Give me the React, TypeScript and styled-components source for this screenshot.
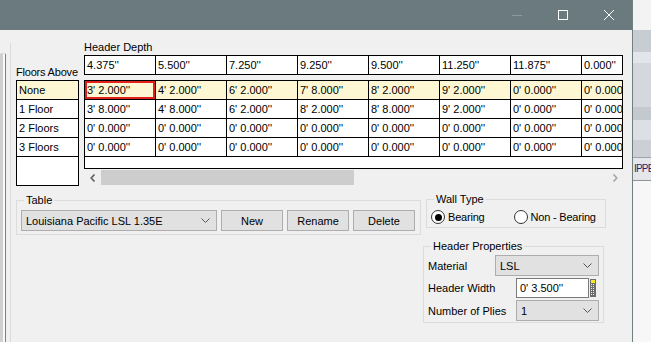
import styled, { createGlobalStyle } from "styled-components"

const GlobalStyle = createGlobalStyle`
  html, body {
    margin: 0;
    padding: 0;
  }
  body {
    width: 651px;
    height: 342px;
    overflow: hidden;
    background: #f0f0f0;
    font-family: "Liberation Sans", Arial, sans-serif;
    font-size: 11px;
    color: #000;
  }
`

const depths = ["4.375''", "5.500''", "7.250''", "9.250''", "9.500''", "11.250''", "11.875''", "0.000''"]
const floors = ["None", "1 Floor", "2 Floors", "3 Floors"]
const zeros = Array(8).fill("0' 0.000''")
const values = [
  ["3' 2.000''", "4' 2.000''", "6' 2.000''", "7' 8.000''", "8' 2.000''", "9' 2.000''", "0' 0.000''", "0' 0.000''"],
  ["3' 8.000''", "4' 8.000''", "6' 2.000''", "8' 2.000''", "8' 8.000''", "9' 2.000''", "0' 0.000''", "0' 0.000''"],
  zeros,
  zeros,
]

const bands = [
  { h: 30, c: "#f3f3f3" },
  { h: 22, c: "#c8cdd4" },
  { h: 11, c: "#e2e5e9" },
  { h: 44, c: "#d4d8de" },
  { h: 13, c: "#c4c8cf" },
  { h: 20, c: "#dcdfe3" },
  { h: 17, c: "#ccd0d6" },
  { h: 1, c: "#a0a4aa" },
]

const Chevron = () => (
  <svg width="9" height="5" viewBox="0 0 9 5">
    <path d="M0.5 0.5 L4.5 4.5 L8.5 0.5" fill="none" stroke="#555" strokeWidth="1" />
  </svg>
)

const Combo = (props: { text: string; width: number }) => (
  <ComboBox $width={props.width}>
    <span>{props.text}</span>
    <Chevron />
  </ComboBox>
)

export default function App() {
  return (
    <>
      <GlobalStyle />
      <Screen>
        <Window>
          <TitleBar>
            <CaptionButton>
              <svg width="10" height="10" viewBox="0 0 10 10">
                <path d="M0 5.5 H10" stroke="#8e9a9d" strokeWidth="1" />
              </svg>
            </CaptionButton>
            <CaptionButton>
              <svg width="10" height="10" viewBox="0 0 10 10">
                <rect x="0.5" y="0.5" width="9" height="9" fill="none" stroke="#fff" strokeWidth="1" />
              </svg>
            </CaptionButton>
            <CaptionButton>
              <svg width="10" height="10" viewBox="0 0 10 10">
                <path d="M0 0 L10 10 M10 0 L0 10" stroke="#fff" strokeWidth="1" />
              </svg>
            </CaptionButton>
          </TitleBar>
          <Body>
            <LeftEdge>
              <SidePanel />
              <Divider />
            </LeftEdge>
            <Content>
              <GridSection>
                <FloorsColumn>
                  <ColumnLabel>Floors Above</ColumnLabel>
                  <FloorsBox>
                    {floors.map((f, i) => (
                      <FloorRow key={f} $highlight={i === 0}>{f}</FloorRow>
                    ))}
                  </FloorsBox>
                </FloorsColumn>
                <DepthColumn>
                  <DepthLabel>Header Depth</DepthLabel>
                  <HeaderRow>
                    {depths.map((d, i) => (
                      <Cell key={i}>{d}</Cell>
                    ))}
                  </HeaderRow>
                  <DataTable>
                    {values.map((row, r) => (
                      <DataRow key={r} $highlight={r === 0}>
                        {row.map((v, c) => (
                          <Cell key={c} $selected={r === 0 && c === 0}>{v}</Cell>
                        ))}
                      </DataRow>
                    ))}
                  </DataTable>
                  <ScrollBar>
                    <ScrollArrow>
                      <svg width="6" height="8" viewBox="0 0 6 8">
                        <path d="M4.5 0.5 L1.2 4 L4.5 7.5" fill="none" stroke="#606060" strokeWidth="1.6" />
                      </svg>
                    </ScrollArrow>
                    <Thumb />
                    <Track />
                    <ScrollArrow>
                      <svg width="6" height="8" viewBox="0 0 6 8">
                        <path d="M1.5 0.5 L4.8 4 L1.5 7.5" fill="none" stroke="#a6a6a6" strokeWidth="1.6" />
                      </svg>
                    </ScrollArrow>
                  </ScrollBar>
                </DepthColumn>
              </GridSection>
              <LowerSection>
                <TableGroup>
                  <GroupLegend>Table</GroupLegend>
                  <TableControls>
                    <Combo text="Louisiana Pacific LSL 1.35E" width={196} />
                    <PushButton>New</PushButton>
                    <PushButton>Rename</PushButton>
                    <PushButton>Delete</PushButton>
                  </TableControls>
                </TableGroup>
                <RightColumn>
                  <WallGroup>
                    <GroupLegend>Wall Type</GroupLegend>
                    <RadioRow>
                      <RadioOption>
                        <RadioCircle $checked />
                        Bearing
                      </RadioOption>
                      <RadioOption>
                        <RadioCircle />
                        Non - Bearing
                      </RadioOption>
                    </RadioRow>
                  </WallGroup>
                  <PropsGroup>
                    <GroupLegend>Header Properties</GroupLegend>
                    <PropRow>
                      <span>Material</span>
                      <Combo text="LSL" width={104} />
                    </PropRow>
                    <PropRow>
                      <span>Header Width</span>
                      <InputGroup>
                        <TextInput>0' 3.500''</TextInput>
                        <svg width="6" height="18" viewBox="0 0 6 18">
                          <rect x="0" y="0" width="6" height="18" fill="#6e6e6e" />
                          <rect x="1" y="1" width="4" height="3" fill="#f5e828" />
                          {[5, 7, 9, 11, 13, 15].map((y) =>
                            [1, 3].map((x) => (
                              <rect key={`${x}-${y}`} x={x} y={y} width="1" height="1" fill="#e8e8e8" />
                            ))
                          )}
                        </svg>
                      </InputGroup>
                    </PropRow>
                    <PropRow>
                      <span>Number of Plies</span>
                      <Combo text="1" width={83} />
                    </PropRow>
                  </PropsGroup>
                </RightColumn>
              </LowerSection>
            </Content>
          </Body>
        </Window>
        <Backdrop>
          {bands.map((b, i) => (
            <Band key={i} $h={b.h} $c={b.c} />
          ))}
          <BackdropLabel>IPPE</BackdropLabel>
          <Band $h={1} $c="#8f949a" />
          <BackdropFill />
        </Backdrop>
      </Screen>
    </>
  )
}

const Screen = styled.div`
  display: flex;
  width: 651px;
  height: 342px;
  overflow: hidden;
`

const Window = styled.div`
  flex: 0 0 632px;
  display: flex;
  flex-direction: column;
  background: #f0f0f0;
  border-right: 1px solid #717e82;
`

const TitleBar = styled.div`
  height: 30px;
  flex: 0 0 30px;
  background: #6b7a7e;
  display: flex;
  justify-content: flex-end;
`

const CaptionButton = styled.div`
  width: 46px;
  height: 30px;
  display: flex;
  align-items: center;
  justify-content: center;
`

const Body = styled.div`
  flex: 1;
  display: flex;
`

const LeftEdge = styled.div`
  flex: 0 0 12px;
  display: flex;
  gap: 4px;
`

const SidePanel = styled.div`
  width: 6px;
  margin-top: 23px;
  border-top: 1px solid #dcdcdc;
  background: linear-gradient(to right, #cfcfcf 0 3px, #fafafa 3px 5px, #7c7c8a 5px 6px);
`

const Divider = styled.div`
  width: 1px;
  margin-top: 13px;
  background: #dadada;
`

const Content = styled.div`
  flex: 1;
  padding: 10px 0 0 4px;
  display: flex;
  flex-direction: column;
`

const GridSection = styled.div`
  display: flex;
  gap: 5px;
`

const FloorsColumn = styled.div`
  width: 63px;
  display: flex;
  flex-direction: column;
  justify-content: flex-end;
`

const ColumnLabel = styled.div`
  line-height: 14px;
  margin-bottom: 1px;
  white-space: nowrap;
  letter-spacing: -0.2px;
`

const FloorsBox = styled.div`
  height: 106px;
  box-sizing: border-box;
  border: 1px solid #000;
  background: #fff;
`

const FloorRow = styled.div<{ $highlight?: boolean }>`
  height: 19px;
  box-sizing: border-box;
  border-bottom: 1px solid #000;
  line-height: 18px;
  padding-left: 2px;
  background: ${(p) => (p.$highlight ? "#fdf8d3" : "#fff")};
`

const DepthColumn = styled.div`
  width: 539px;
  display: flex;
  flex-direction: column;
`

const DepthLabel = styled.div`
  height: 15px;
  line-height: 14px;
`

const HeaderRow = styled.div`
  display: flex;
  height: 20px;
  box-sizing: border-box;
  border: 1px solid #000;
  background: #fff;
  overflow: hidden;
`

const Cell = styled.div<{ $selected?: boolean }>`
  flex: 0 0 71px;
  box-sizing: border-box;
  border-right: 1px solid #000;
  padding-left: 2px;
  line-height: 18px;
  white-space: nowrap;
  overflow: hidden;
  box-shadow: ${(p) => (p.$selected ? "inset 0 0 0 2px #e3201b" : "none")};
`

const DataTable = styled.div`
  margin-top: 5px;
  height: 89px;
  box-sizing: border-box;
  border: 1px solid #000;
  background: #fff;
  overflow: hidden;
`

const DataRow = styled.div<{ $highlight?: boolean }>`
  display: flex;
  height: 19px;
  box-sizing: border-box;
  border-bottom: 1px solid #000;
  background: ${(p) => (p.$highlight ? "#fdf8d3" : "#fff")};
`

const ScrollBar = styled.div`
  height: 17px;
  display: flex;
  align-items: stretch;
`

const ScrollArrow = styled.div`
  flex: 0 0 17px;
  display: flex;
  align-items: center;
  justify-content: center;
`

const Thumb = styled.div`
  flex: 0 0 253px;
  margin: 1px 0;
  background: #cdcdcd;
`

const Track = styled.div`
  flex: 1;
`

const LowerSection = styled.div`
  display: flex;
  align-items: flex-start;
`

const GroupBox = styled.fieldset`
  margin: 0;
  border: 1px solid #dcdcdc;
  box-sizing: border-box;
  min-width: 0;
`

const GroupLegend = styled.legend`
  margin-left: 3px;
  padding: 0 2px;
  line-height: 12px;
  font-size: 11px;
`

const TableGroup = styled(GroupBox)`
  width: 405px;
  margin-top: 8px;
  padding: 4px 4px 3px 4px;
`

const TableControls = styled.div`
  display: flex;
  gap: 4px;
`

const ComboBox = styled.div<{ $width: number }>`
  width: ${(p) => p.$width}px;
  height: 21px;
  box-sizing: border-box;
  background: #e1e1e1;
  border: 1px solid #adadad;
  display: flex;
  align-items: center;
  justify-content: space-between;
  padding: 0 6px 0 4px;
  white-space: nowrap;
`

const PushButton = styled.div`
  width: 62px;
  height: 21px;
  box-sizing: border-box;
  background: #e1e1e1;
  border: 1px solid #adadad;
  display: flex;
  align-items: center;
  justify-content: center;
`

const RightColumn = styled.div`
  margin-left: 2px;
  display: flex;
  flex-direction: column;
`

const WallGroup = styled(GroupBox)`
  width: 180px;
  margin-top: 7px;
  margin-left: 3px;
  padding: 5px 0 3px 4px;
`

const RadioRow = styled.div`
  display: flex;
  gap: 29px;
  white-space: nowrap;
`

const RadioOption = styled.label`
  display: flex;
  align-items: center;
  gap: 3px;
  line-height: 14px;
  white-space: nowrap;
  letter-spacing: -0.2px;
  flex-shrink: 0;
`

const RadioCircle = styled.span<{ $checked?: boolean }>`
  flex: 0 0 14px;
  width: 14px;
  height: 14px;
  box-sizing: border-box;
  border-radius: 50%;
  border: 1px solid #333;
  background: #fff;
  display: flex;
  align-items: center;
  justify-content: center;
  &::after {
    content: "";
    width: 7px;
    height: 7px;
    border-radius: 50%;
    background: ${(p) => (p.$checked ? "#000" : "transparent")};
  }
`

const PropsGroup = styled(GroupBox)`
  width: 181px;
  margin-top: 12px;
  padding: 3px 4px 1px 4px;
  display: flex;
  flex-direction: column;
  gap: 2px;
`

const PropRow = styled.div`
  display: flex;
  align-items: center;
  justify-content: space-between;
  white-space: nowrap;
`

const InputGroup = styled.div`
  width: 83px;
  display: flex;
  align-items: center;
  gap: 1px;
`

const TextInput = styled.div`
  width: 73px;
  height: 20px;
  box-sizing: border-box;
  background: #fff;
  border: 1px solid #7a7a7a;
  padding-left: 3px;
  line-height: 18px;
`

const Backdrop = styled.div`
  flex: 1;
  display: flex;
  flex-direction: column;
  overflow: hidden;
`

const Band = styled.div<{ $h: number; $c: string }>`
  flex: 0 0 ${(p) => p.$h}px;
  background: ${(p) => p.$c};
`

const BackdropLabel = styled.div`
  flex: 0 0 20px;
  background: #e4e6ea;
  color: #2b2070;
  font-size: 10px;
  letter-spacing: -0.8px;
  line-height: 22px;
  padding-left: 1px;
  white-space: nowrap;
`

const BackdropFill = styled.div`
  flex: 1;
  background: #f7f7f7;
`
